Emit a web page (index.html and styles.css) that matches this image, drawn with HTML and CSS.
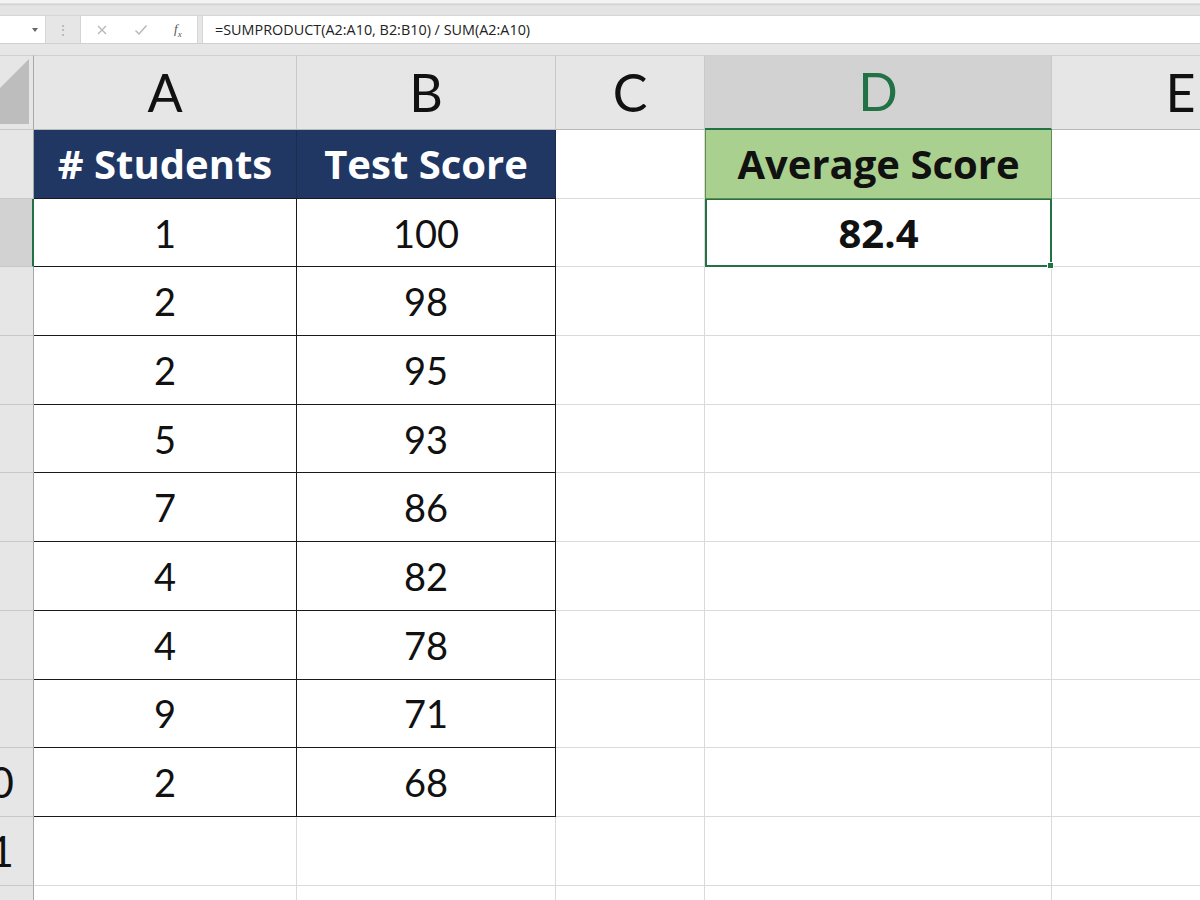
FILE: index.html
```html
<!DOCTYPE html>
<html lang="en">
<head>
    <meta charset="UTF-8">
    <title>Weighted Average - SUMPRODUCT</title>
    <link rel="stylesheet" href="styles.css">
</head>
<body>
    <div class="ribbon-edge"></div>

    <div class="formula-bar">
        <div class="name-box"><span class="caret"></span></div>
        <div class="grip">⋮</div>
        <div class="fx-box">
            <svg class="fx-icon" width="12" height="12" viewBox="0 0 12 12"><path d="M2 2 L10 10 M10 2 L2 10" stroke="#b5b5b5" stroke-width="1.2" fill="none"/></svg>
            <svg class="fx-icon" width="14" height="12" viewBox="0 0 14 12"><path d="M1.5 6.5 L5 10 L12.5 1.5" stroke="#b5b5b5" stroke-width="1.3" fill="none"/></svg>
            <span class="fx">f<sub>x</sub></span>
        </div>
        <div class="formula">=SUMPRODUCT(A2:A10, B2:B10) / SUM(A2:A10)</div>
    </div>

    <div class="sheet" id="sheet">
        <div class="corner"><span class="tri"></span></div>
        <div class="col-head">A</div>
        <div class="col-head">B</div>
        <div class="col-head">C</div>
        <div class="col-head active">D</div>
        <div class="col-head">E</div>
    </div>

    <script>
        const data = [[1, 100], [2, 98], [2, 95], [5, 93], [7, 86], [4, 82], [4, 78], [9, 71], [2, 68]];
        const sheet = document.getElementById('sheet');

        function cell(cls, text) {
            const div = document.createElement('div');
            div.className = 'cell ' + cls;
            div.textContent = text === undefined ? '' : text;
            sheet.appendChild(div);
        }

        for (let r = 1; r <= 12; r++) {
            cell('row-head' + (r === 2 ? ' active' : ''), r === 10 || r === 11 ? r : '');
            if (r === 1) {
                cell('tbl head', '# Students');
                cell('tbl head', 'Test Score');
                cell('');
                cell('avg-label', 'Average Score');
                cell('');
            } else if (r <= 10) {
                const [n, score] = data[r - 2];
                cell('tbl', n);
                cell('tbl', score);
                cell('');
                cell(r === 2 ? 'avg-value' : '', r === 2 ? '82.4' : '');
                cell('');
            } else {
                cell('');
                cell('');
                cell('');
                cell('');
                cell('');
            }
        }
    </script>
</body>
</html>
```

FILE: styles.css
```css
html, body {
    margin: 0;
    padding: 0;
    overflow: hidden;
}
body {
    width: 1200px;
    height: 900px;
    background-color: #e6e6e6;
    font-family: Lato, "Open Sans", sans-serif;
}
.ribbon-edge {
    height: 15px;
    background: linear-gradient(#f3f3f3 0, #f3f3f3 3px, #cfcfcf 4px, #e4e4e4 6px, #e4e4e4 100%);
    border-bottom: 1px solid #d6d6d6;
}
.formula-bar {
    display: flex;
    height: 27px;
    background-color: #e6e6e6;
    border-bottom: 1px solid #d0d0d0;
}
.name-box {
    width: 45px;
    background-color: white;
    border-right: 1px solid #d4d4d4;
    position: relative;
}
.caret {
    position: absolute;
    right: 7px;
    top: 12px;
    border-left: 3px solid transparent;
    border-right: 3px solid transparent;
    border-top: 4px solid #666;
}
.grip {
    width: 34px;
    text-align: center;
    color: #b0b0b0;
    font-size: 14px;
    line-height: 27px;
}
.fx-box {
    width: 118px;
    display: flex;
    align-items: center;
    gap: 26px;
    padding-left: 15px;
    box-sizing: border-box;
    background-color: white;
    border-left: 1px solid #d4d4d4;
    border-right: 1px solid #d4d4d4;
}
.fx {
    font-family: "Liberation Serif", serif;
    font-style: italic;
    font-size: 13px;
    color: #555;
}
.fx sub {
    font-size: 9px;
}
.formula {
    flex: 1;
    margin-left: 4px;
    background-color: white;
    border-left: 1px solid #d4d4d4;
    padding-left: 12px;
    font-family: "Open Sans", sans-serif;
    font-size: 14.4px;
    line-height: 27px;
    color: #222;
    white-space: nowrap;
}
.sheet {
    margin-top: 11px;
    margin-left: -66px;
    display: grid;
    grid-template-columns: 100px 263px 259px 149px 347px 258px;
    grid-template-rows: 75px;
    grid-auto-rows: 68.7px;
    background-color: white;
}
.corner {
    background-color: #e6e6e6;
    border-right: 1px solid #a8a8a8;
    border-bottom: 1px solid #c8c8c8;
    border-top: 1px solid #d0d0d0;
    position: relative;
}
.tri {
    position: absolute;
    right: 4px;
    bottom: 5px;
    width: 0;
    height: 0;
    border-left: 65px solid transparent;
    border-bottom: 65px solid #bdbdbd;
}
.col-head {
    background-color: #e6e6e6;
    border-right: 1px solid #c8c8c8;
    border-top: 1px solid #d0d0d0;
    border-bottom: 1px solid #b9b9b9;
    display: flex;
    align-items: center;
    justify-content: center;
    font-size: 52px;
    color: #111;
    padding-bottom: 2px;
}
.col-head.active {
    background-color: #d2d2d2;
    color: #217346;
    border-bottom: 2px solid #217346;
}
.cell {
    box-sizing: border-box;
    border-right: 1px solid #dadada;
    border-bottom: 1px solid #dadada;
    display: flex;
    align-items: center;
    justify-content: center;
    font-size: 38px;
    color: #111;
}
.cell.row-head {
    background-color: #e6e6e6;
    border-right: 1px solid #a8a8a8;
    border-bottom: 1px solid #c8c8c8;
    padding-left: 12px;
    font-size: 42px;
    color: #111;
}
.cell.row-head.active {
    background-color: #d2d2d2;
    border-right: 2px solid #217346;
}
.cell.tbl {
    border-right-color: #1a1a1a;
    border-bottom-color: #1a1a1a;
}
.cell.head {
    background-color: #203764;
    color: white;
    font-family: "Open Sans", sans-serif;
    font-weight: 700;
    font-size: 40px;
    border-right-color: #1a2c50;
}
.avg-label {
    background-color: #a9d08e;
    font-family: "Open Sans", sans-serif;
    font-weight: 700;
    font-size: 40px;
    border: 1px solid #5f8f4e;
    border-top: none;
}
.avg-value {
    font-family: "Open Sans", sans-serif;
    font-weight: 700;
    font-size: 40px;
    border: 2px solid #217346;
    border-top-width: 1px;
    position: relative;
}
.avg-value::after {
    content: "";
    position: absolute;
    right: -4px;
    bottom: -4px;
    width: 5px;
    height: 5px;
    background-color: #217346;
    border: 1px solid white;
    z-index: 2;
}
```
